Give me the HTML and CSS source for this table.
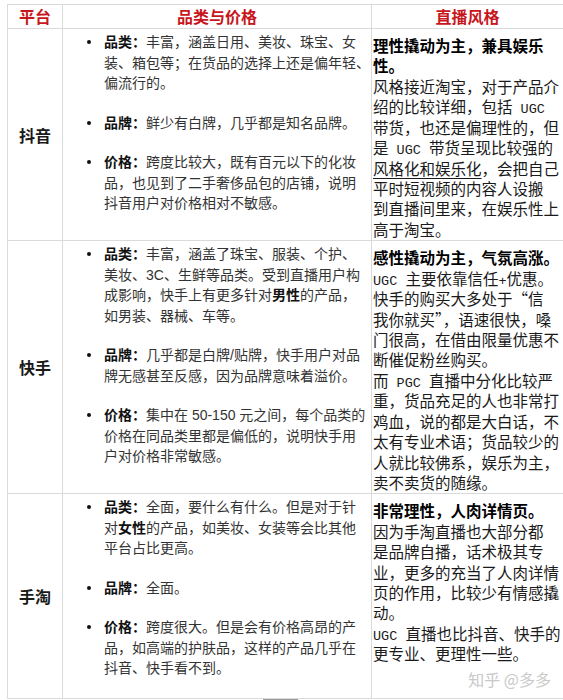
FILE: index.html
```html
<!DOCTYPE html>
<html lang="zh-CN">
<head>
<meta charset="utf-8">
<title>平台对比</title>
<link rel="stylesheet" href="styles.css">
</head>
<body>
<div class="sheet">
  <table class="grid">
    <colgroup>
      <col class="c1"><col class="c2"><col class="c3">
    </colgroup>
    <thead>
      <tr class="head">
        <th>平台</th>
        <th>品类与价格</th>
        <th>直播风格</th>
      </tr>
    </thead>
    <tbody>
      <tr>
        <td class="plat">抖音</td>
        <td class="cat">
          <ul>
            <li><b>品类：</b>丰富，涵盖日用、美妆、珠宝、女<br>装、箱包等；在货品的选择上还是偏年轻、<br>偏流行的。</li>
            <li><b>品牌：</b>鲜少有白牌，几乎都是知名品牌。</li>
            <li><b>价格：</b>跨度比较大，既有百元以下的化妆<br>品，也见到了二手奢侈品包的店铺，说明<br>抖音用户对价格相对不敏感。</li>
          </ul>
        </td>
        <td class="style">
          <b>理性撬动为主，兼具娱乐<br>性。</b><br>
          风格接近淘宝，对于产品介<br>绍的比较详细，包括<span class="lat"> UGC</span><br>带货，也还是偏理性的，但<br>是<span class="lat"> UGC </span>带货呈现比较强的<br><u>风格化和娱乐化</u>，会把自己<br>平时短视频的内容人设搬<br>到直播间里来，在娱乐性上<br>高于淘宝。
        </td>
      </tr>
      <tr>
        <td class="plat">快手</td>
        <td class="cat">
          <ul>
            <li><b>品类：</b>丰富，涵盖了珠宝、服装、个护、<br>美妆、3C、生鲜等品类。受到直播用户构<br>成影响，快手上有更多针对<b>男性</b>的产品，<br>如男装、器械、车等。</li>
            <li><b>品牌：</b>几乎都是白牌/贴牌，快手用户对品<br>牌无感甚至反感，因为品牌意味着溢价。</li>
            <li><b>价格：</b>集中在 50-150 元之间，每个品类的<br>价格在同品类里都是偏低的，说明快手用<br>户对价格非常敏感。</li>
          </ul>
        </td>
        <td class="style">
          <b>感性撬动为主，气氛高涨。</b><br>
          <span class="lat">UGC </span>主要依靠信任<span class="lat">+</span>优惠。<br>快手的购买大多处于“信<br>我你就买”，语速很快，嗓<br>门很高，在借由限量优惠不<br>断催促粉丝购买。<br>而<span class="lat"> PGC </span>直播中分化比较严<br>重，货品充足的人也非常打<br>鸡血，说的都是大白话，不<br>太有专业术语；货品较少的<br>人就比较佛系，娱乐为主，<br>卖不卖货的随缘。
        </td>
      </tr>
      <tr>
        <td class="plat">手淘</td>
        <td class="cat">
          <ul>
            <li><b>品类：</b>全面，要什么有什么。但是对于针<br>对<b>女性</b>的产品，如美妆、女装等会比其他<br>平台占比更高。</li>
            <li><b>品牌：</b>全面。</li>
            <li><b>价格：</b>跨度很大。但是会有价格高昂的产<br>品，如高端的护肤品，这样的产品几乎在<br>抖音、快手看不到。</li>
          </ul>
        </td>
        <td class="style last">
          <b>非常理性，人肉详情页。</b><br>
          因为手淘直播也大部分都<br>是品牌自播，话术极其专<br>业，更多的充当了人肉详情<br>页的作用，比较少有情感撬<br>动。<br><span class="lat">UGC </span>直播也比抖音、快手的<br>更专业、更理性一些。
          <span class="mark">知乎 @多多</span>
        </td>
      </tr>
    </tbody>
  </table>
  <div class="tab-stub"></div>
</div>
</body>
</html>
```
FILE: styles.css
```css
body {
  margin: 0;
  background: #ffffff;
  font-family: "Noto Sans CJK SC", sans-serif;
  color: #222;
}

.sheet {
  padding: 4px 0 0 7px;
}

.grid {
  border-collapse: collapse;
  table-layout: fixed;
  width: 556px;
}

.c1 { width: 55px; }
.c2 { width: 309px; }
.c3 { width: 192px; }

.grid th,
.grid td {
  border: 1px solid #dadada;
  padding: 0;
}

.head th {
  height: 23px;
  font-size: 16px;
  line-height: 23px;
  font-weight: bold;
  color: #c8161d;
  text-align: center;
}

.grid .plat {
  text-align: center;
  vertical-align: middle;
  font-size: 16px;
  font-weight: bold;
  color: #1a1a1a;
}

.grid .cat {
  vertical-align: top;
  font-family: "Liberation Sans", "Noto Sans CJK SC", sans-serif;
  font-size: 14px;
  line-height: 20.5px;
  color: #333;
  white-space: nowrap;
}

.cat ul {
  margin: 3px 0 19px;
  padding-left: 41px;
  list-style: none;
}

.cat li {
  position: relative;
}

.cat li + li {
  margin-top: 19px;
}

.cat li::before {
  content: "";
  position: absolute;
  left: -17px;
  top: 8px;
  width: 4px;
  height: 4px;
  border-radius: 50%;
  background: #111;
}

.cat b {
  color: #111;
}

.grid .style {
  vertical-align: top;
  padding: 6px 0 1px 1px;
  font-family: "Noto Sans CJK SC", sans-serif;
  font-size: 15.5px;
  line-height: 20.4px;
  color: #1a1a1a;
  white-space: nowrap;
}

.style .lat {
  font-family: "Liberation Mono", monospace;
  font-size: 13.5px;
  line-height: 1;
  white-space: pre;
}

.style b {
  color: #000;
}

.style u {
  text-decoration-thickness: 1px;
  text-underline-offset: 3px;
}

.grid .last {
  position: relative;
}

.mark {
  position: absolute;
  right: 12px;
  bottom: 9px;
  font-family: "Noto Sans CJK SC", sans-serif;
  font-size: 16px;
  line-height: 20px;
  color: #c9c9c9;
}

.tab-stub {
  width: 33px;
  height: 4px;
  margin-left: 256px;
  border: 1px solid #9a9a9a;
  border-bottom: none;
}
```
